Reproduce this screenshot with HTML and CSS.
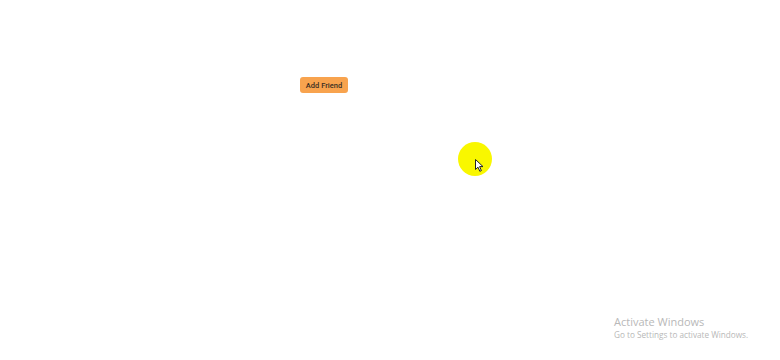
FILE: index.html
```html
<!DOCTYPE html>
<html>
    <head>
        <meta charset="UTF-8">
        <title>Add Friend</title>
        <link rel="stylesheet" href="styles.css">
    </head>
    <body>
        <div class="page">
            <button class="add-btn" type="button">Add Friend</button>
        </div>
        <!-- cursor highlight from the screen recorder -->
        <div class="cursor-dot">
            <svg class="pointer" width="9" height="13" viewBox="0 0 9 13">
                <path d="M0.5 0.5 L0.5 10.5 L3 8.2 L4.8 12.3 L6.4 11.6 L4.6 7.6 L8 7.6 Z" fill="#fff" stroke="#222" stroke-width="1" stroke-linejoin="round"/>
            </svg>
        </div>
        <div class="watermark">
            <div class="wm-title">Activate Windows</div>
            <div class="wm-sub">Go to Settings to activate Windows.</div>
        </div>
    </body>
</html>
```

FILE: styles.css
```css
body {
    margin: 0;
    font-family: 'Liberation Sans', Arial, sans-serif;
    background-color: #fff;
    width: 780px;
    height: 360px;
    overflow: hidden;
}
.page {
    padding: 77px 0 0 300px;
}
.add-btn {
    display: block;
    width: 48px;
    height: 16px;
    padding: 0;
    background-color: #f8a34e;
    color: #3a2e22;
    border: none;
    border-radius: 3px;
    font-family: 'Roboto', Arial, sans-serif;
    font-size: 7.5px;
    font-weight: 500;
    cursor: pointer;
}
.cursor-dot {
    position: absolute;
    left: 458px;
    top: 142px;
    width: 34px;
    height: 34px;
    border-radius: 50%;
    background-color: #f9f700;
}
.pointer {
    position: absolute;
    left: 17px;
    top: 17px;
}
.watermark {
    position: absolute;
    left: 614px;
    top: 315px;
    color: #b8b8b8;
    font-family: 'Open Sans', 'Noto Sans', sans-serif;
}
.wm-title {
    font-size: 11px;
    line-height: 14px;
}
.wm-sub {
    font-size: 8.2px;
    line-height: 12px;
    margin-top: 0;
}
```
